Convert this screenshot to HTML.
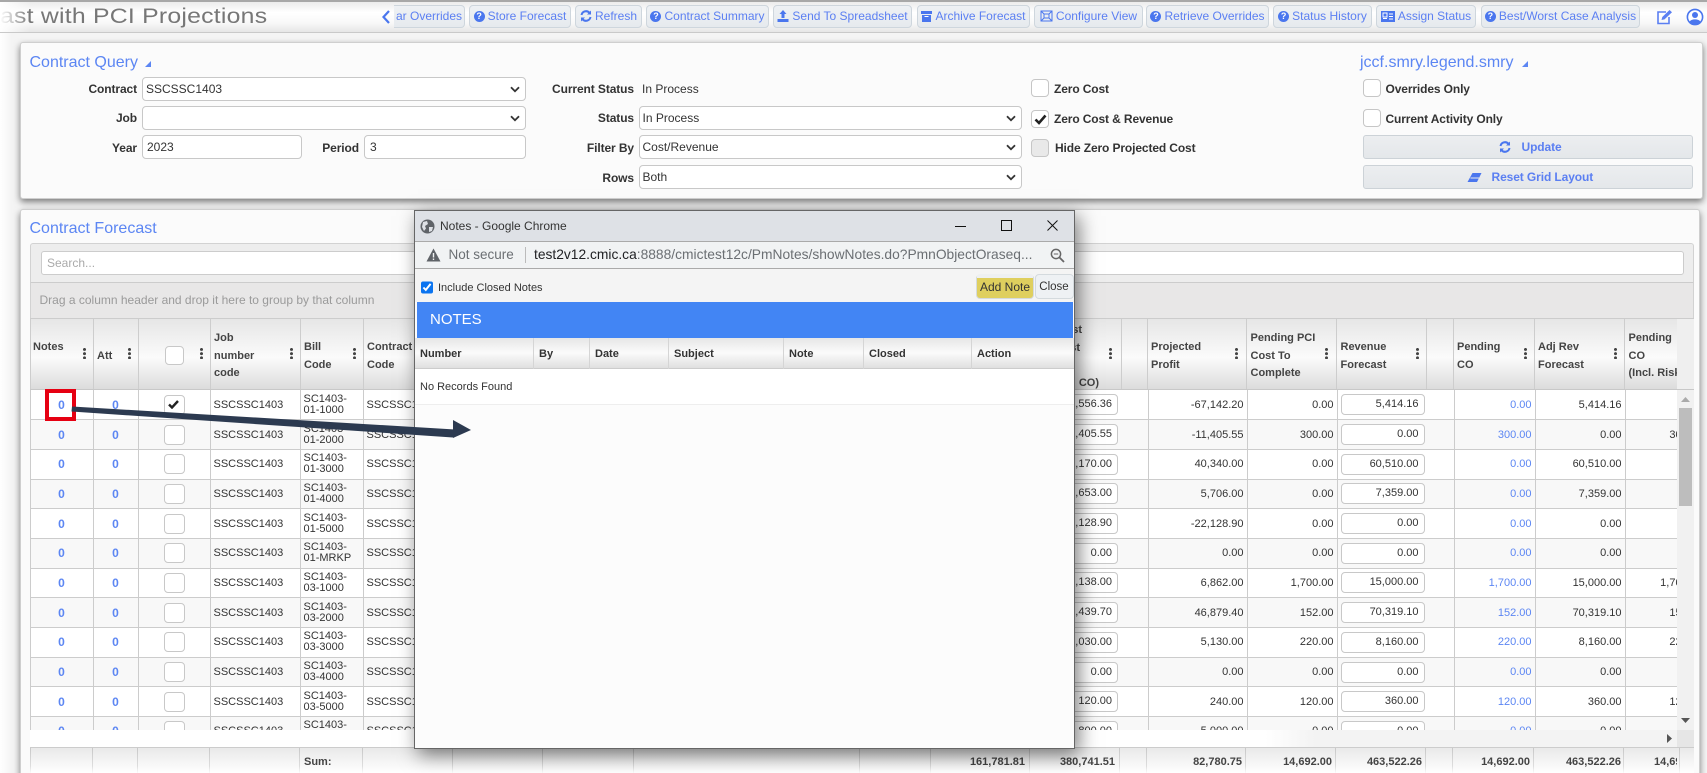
<!DOCTYPE html>
<html><head><meta charset="utf-8"><title>Forecast with PCI Projections</title>
<style>
html,body{margin:0;padding:0;width:1707px;height:773px;overflow:hidden;background:#f4f4f4;font-family:"Liberation Sans",Arial,sans-serif;font-size:12px;color:#333}
#wrap{position:absolute;left:0;top:0;width:1707px;height:773px;overflow:hidden;background:#f4f4f4}
div,span,b{box-sizing:border-box}
.a{position:absolute}
.btn{position:absolute;top:5px;height:23px;line-height:21px;border:1px solid #ced6dd;border-radius:4px;background:linear-gradient(#eef1f4,#e6eaee);color:#5b7ff2;text-align:center;white-space:nowrap;overflow:hidden}
.q{display:inline-block;width:11px;height:11px;border-radius:50%;background:#4a76ee;color:#fff;font-size:9px;font-weight:bold;line-height:11px;text-align:center;vertical-align:top;margin-top:5px;margin-right:3px}
.btn svg{vertical-align:-2px;margin-right:3px}
.panel{position:absolute;background:#fbfbfb;border:1px solid #cfcfcf;border-radius:3px;box-shadow:0 3px 7px rgba(0,0,0,.5)}
.h{position:absolute;font-size:16px;color:#5c86f3;white-space:nowrap;line-height:20px}
.lb{position:absolute;font-weight:bold;text-align:right;line-height:16px;white-space:nowrap;color:#333;letter-spacing:-.1px}
.in{position:absolute;background:#fff;border:1px solid #c8c8c8;border-radius:4px;line-height:22px;padding-left:3px;white-space:nowrap;color:#333}
.in svg{position:absolute;right:5px;top:8px}
.cb{position:absolute;width:18px;height:18px;background:#fff;border:1px solid #c6c6c6;border-radius:4px}
.cl{position:absolute;font-weight:bold;line-height:16px;white-space:nowrap;color:#333;letter-spacing:-.12px}
.gb{position:absolute;left:1363px;width:330px;height:24px;border:1px solid #ccd2d7;border-radius:3px;background:linear-gradient(#eceef0,#e4e7ea);color:#5b7ff2;font-weight:bold;line-height:23px;white-space:nowrap;letter-spacing:-.1px}
#rows{position:absolute;left:29.5px;top:390px;width:1647.5px;height:340px;overflow:hidden;background:#fff}
table{border-collapse:collapse;table-layout:fixed;width:1676.5px;font-size:11px;color:#333}
td{height:29.7px;border:1px solid #ccc;border-top:0;padding:0 3px;box-sizing:border-box;white-space:nowrap;overflow:hidden}
tr:nth-child(even) td{background:#f8f8f8}
.z{text-align:center;color:#5c86f3;font-weight:bold;font-size:12px}
.c{text-align:center}.c i{display:block;width:19px;height:18px;margin:0 auto;background:#fff;border:1px solid #c8c8c8;border-radius:4px;position:relative}
.c i svg{position:absolute;left:3px;top:4px}
.r{text-align:right}.bl{text-align:right;color:#5c86f3}
.bc{line-height:11px;white-space:normal}
.f{text-align:right;padding:0}
.f b{display:block;font-weight:normal;height:21px;line-height:19px;background:#fff;border:1px solid #c8c8c8;border-radius:4px;padding-right:5px;text-align:right}
td.n1 b{width:90px;margin-left:2px}
td.n2 b{width:84px;margin-left:3px}
#hd{position:absolute;left:30px;top:318px;width:1664px;height:72px;background:linear-gradient(#e6e6e6,#f5f5f5 40%,#fbfbfb 55%,#dcdcdc);border-top:1px solid #ccc;border-bottom:1px solid #c8c8c8;overflow:hidden}
.v{position:absolute;top:0;width:1px;height:72px;background:#cdcdcd}
.t{position:absolute;font-size:11px;font-weight:bold;line-height:17.5px;color:#444;white-space:nowrap}
.k{position:absolute;width:3px;height:11px;background:radial-gradient(circle at 1.5px 1.5px,#444 1.4px,transparent 1.6px) 0 0/3px 4.2px repeat-y}
#ft{position:absolute;left:30px;top:747px;width:1664px;height:26px;background:linear-gradient(#e9e9e9,#f6f6f6 60%,#fff);border-top:1px solid #ccc;overflow:hidden}
.fv{position:absolute;top:0;width:1px;height:26px;background:linear-gradient(#c8c8c8,#ddd 70%,#fff)}
.fs{position:absolute;top:7px;font-size:11px;font-weight:bold;line-height:14px;color:#444;white-space:nowrap;text-align:right}
#m{position:absolute;left:414px;top:210px;width:661px;height:539px;background:#fcfcfc;border:1px solid #666;box-shadow:4px 6px 18px rgba(0,0,0,.5);z-index:5}
.mc{position:absolute;top:0;height:31px;width:1px;background:#d5d5d5}
.mt{position:absolute;top:8px;font-size:11px;font-weight:bold;line-height:16px;color:#333}
</style></head><body>
<div id="wrap">

<!-- top bar -->
<div class="a" style="left:0;top:0;width:1707px;height:33px;background:linear-gradient(#ececec,#fff 35%,#f8f8f8 70%,#e6e6e6);border-top:2px solid #a8a8a8;border-bottom:1px solid #c9c9c9"></div>
<div class="a" style="left:0;top:1px;width:260px;height:34px;line-height:32px;font-size:21px;color:#777;white-space:nowrap;transform:scaleX(1.18);transform-origin:0 0;letter-spacing:.2px">ast with PCI Projections</div>
<div class="a" style="left:0;top:2px;width:30px;height:30px;background:linear-gradient(90deg,#fff,rgba(255,255,255,0))"></div>
<svg class="a" style="left:381px;top:9px" width="10" height="16" viewBox="0 0 10 16"><path d="M8 2 L2.5 8 L8 14" fill="none" stroke="#4a76ee" stroke-width="2.2"/></svg>
<div class="btn" style="left:394px;width:71px;border-left:0;border-radius:0 4px 4px 0">ar Overrides</div>
<div class="btn" style="left:469px;width:102px"><span class="q">?</span>Store Forecast</div>
<div class="btn" style="left:575px;width:67px"><svg width="12" height="12" viewBox="0 0 12 12"><path d="M1.5 5 A4.6 4.6 0 0 1 9.5 2.8 M10.5 7 A4.6 4.6 0 0 1 2.5 9.2" fill="none" stroke="#4a76ee" stroke-width="2"/><path d="M11 0.5 V4.5 H7 Z M1 11.5 V7.5 H5 Z" fill="#4a76ee"/></svg>Refresh</div>
<div class="btn" style="left:646px;width:123px"><span class="q">?</span>Contract Summary</div>
<div class="btn" style="left:773px;width:139px"><svg width="12" height="12" viewBox="0 0 12 12"><path d="M6 0 L9.5 4 H7.5 V8 H4.5 V4 H2.5 Z M0.5 9 H11.5 V12 H0.5 Z" fill="#4a76ee"/></svg>Send To Spreadsheet</div>
<div class="btn" style="left:917px;width:113px"><svg width="11" height="12" viewBox="0 0 11 12"><path d="M0 1 H11 V4 H0 Z M1 5 H10 V12 H1 Z" fill="#4a76ee"/><path d="M3.5 6.5 H7.5" stroke="#fff"/></svg>Archive Forecast</div>
<div class="btn" style="left:1034px;width:109px"><svg width="13" height="12" viewBox="0 0 13 12"><path d="M1 1 H12 V11 H1 Z M4 4 H9 V8 H4 Z M1 1 L4 4 M12 1 L9 4 M1 11 L4 8 M12 11 L9 8" fill="none" stroke="#4a76ee"/></svg>Configure View</div>
<div class="btn" style="left:1146px;width:123px"><span class="q">?</span>Retrieve Overrides</div>
<div class="btn" style="left:1273px;width:99px"><span class="q">?</span>Status History</div>
<div class="btn" style="left:1376px;width:100px"><svg width="14" height="11" viewBox="0 0 14 11"><path d="M0 0 H14 V11 H0 Z" fill="#4a76ee"/><path d="M2 2 H6 V6 H2 Z M2 7.5 H6 M8 3 H12 M8 5.5 H12 M8 8 H12" fill="none" stroke="#fff"/></svg>Assign Status</div>
<div class="btn" style="left:1481px;width:159px"><span class="q">?</span>Best/Worst Case Analysis</div>
<svg class="a" style="left:1656px;top:9px" width="17" height="16" viewBox="0 0 17 16"><path d="M10 3 H2 V14.5 H13 V8" fill="none" stroke="#5b7ff2" stroke-width="1.6"/><path d="M5.5 11 L6.3 8 L13.5 1 L16 3.2 L8.5 10.4 Z" fill="#5b7ff2"/></svg>
<svg class="a" style="left:1686px;top:8px" width="18" height="18" viewBox="0 0 18 18"><circle cx="9" cy="9" r="7.6" fill="#fff" stroke="#4a76ee" stroke-width="1.6"/><circle cx="9" cy="7" r="3" fill="#4a76ee"/><path d="M3.5 14 C4.5 10.5 13.5 10.5 14.5 14 A7 7 0 0 1 3.5 14 Z" fill="#4a76ee"/></svg>

<!-- query panel -->
<div class="panel" style="left:19.5px;top:42px;width:1683px;height:157px"></div>
<div class="h" style="left:29.5px;top:53px">Contract Query</div>
<svg class="a" style="left:145px;top:61px" width="6" height="6"><path d="M0 6 H6 V0 Z" fill="#5c86f3"/></svg>
<div class="lb" style="left:60px;width:77px;top:81px">Contract</div>
<div class="in" style="left:142px;top:77px;width:383.5px;height:24px">SSCSSC1403<svg width="10" height="7" viewBox="0 0 10 7"><path d="M1 1.2 L5 5.2 L9 1.2" fill="none" stroke="#333" stroke-width="1.8"/></svg></div>
<div class="lb" style="left:60px;width:77px;top:110px">Job</div>
<div class="in" style="left:142px;top:106px;width:383.5px;height:24px"><svg width="10" height="7" viewBox="0 0 10 7"><path d="M1 1.2 L5 5.2 L9 1.2" fill="none" stroke="#333" stroke-width="1.8"/></svg></div>
<div class="lb" style="left:60px;width:77px;top:140px">Year</div>
<div class="in" style="left:142px;top:135px;width:160px;height:24px;padding-left:4px">2023</div>
<div class="lb" style="left:300px;width:59px;top:140px">Period</div>
<div class="in" style="left:364px;top:135px;width:161.5px;height:24px;padding-left:5px">3</div>

<div class="lb" style="left:520px;width:114px;top:81px">Current Status</div>
<div class="a" style="left:642px;top:81px;line-height:16px">In Process</div>
<div class="lb" style="left:520px;width:114px;top:110px">Status</div>
<div class="in" style="left:638.5px;top:106px;width:383px;height:24px">In Process<svg width="10" height="7" viewBox="0 0 10 7"><path d="M1 1.2 L5 5.2 L9 1.2" fill="none" stroke="#333" stroke-width="1.8"/></svg></div>
<div class="lb" style="left:520px;width:114px;top:140px">Filter By</div>
<div class="in" style="left:638.5px;top:135px;width:383px;height:24px">Cost/Revenue<svg width="10" height="7" viewBox="0 0 10 7"><path d="M1 1.2 L5 5.2 L9 1.2" fill="none" stroke="#333" stroke-width="1.8"/></svg></div>
<div class="lb" style="left:520px;width:114px;top:170px">Rows</div>
<div class="in" style="left:638.5px;top:165px;width:383px;height:24px">Both<svg width="10" height="7" viewBox="0 0 10 7"><path d="M1 1.2 L5 5.2 L9 1.2" fill="none" stroke="#333" stroke-width="1.8"/></svg></div>

<div class="cb" style="left:1031px;top:79px"></div><div class="cl" style="left:1054px;top:81px">Zero Cost</div>
<div class="cb" style="left:1031px;top:110px"><svg style="position:absolute;left:2px;top:3px" width="13" height="11" viewBox="0 0 13 11"><path d="M1.5 5.5 L5 9 L11.5 1.5" fill="none" stroke="#222" stroke-width="2.6"/></svg></div><div class="cl" style="left:1054px;top:111px">Zero Cost &amp; Revenue</div>
<div class="cb" style="left:1031px;top:139px;background:#e9e9e9"></div><div class="cl" style="left:1055px;top:140px">Hide Zero Projected Cost</div>

<div class="h" style="left:1360px;top:53px">jccf.smry.legend.smry</div>
<svg class="a" style="left:1522px;top:61px" width="6" height="6"><path d="M0 6 H6 V0 Z" fill="#5c86f3"/></svg>
<div class="cb" style="left:1362.5px;top:79px"></div><div class="cl" style="left:1385.5px;top:81px">Overrides Only</div>
<div class="cb" style="left:1362.5px;top:109px"></div><div class="cl" style="left:1385.5px;top:111px">Current Activity Only</div>
<div class="gb" style="left:1362.5px;top:135px"><svg class="a" style="left:135px;top:5px" width="12" height="12" viewBox="0 0 12 12"><path d="M1.5 5 A4.6 4.6 0 0 1 9.5 2.8 M10.5 7 A4.6 4.6 0 0 1 2.5 9.2" fill="none" stroke="#4a76ee" stroke-width="2"/><path d="M11 0.5 V4.5 H7 Z M1 11.5 V7.5 H5 Z" fill="#4a76ee"/></svg><span class="a" style="left:158px">Update</span></div>
<div class="gb" style="left:1362.5px;top:165px"><svg class="a" style="left:103px;top:6px" width="15" height="12" viewBox="0 0 15 12"><path d="M5.5 1 H14.5 L10 10 H0.5 Z" fill="#4a76ee"/><path d="M3.5 6 H12" stroke="#e8ebee" stroke-width="1"/></svg><span class="a" style="left:128px">Reset Grid Layout</span></div>

<!-- forecast panel -->
<div class="panel" style="left:19.5px;top:209px;width:1680.5px;height:580px"></div>
<div class="h" style="left:29.5px;top:219px">Contract Forecast</div>
<div class="a" style="left:29.5px;top:243px;width:1664.5px;height:40px;background:#ededed;border:1px solid #d2d2d2;border-bottom:1px solid #ccc;border-radius:3px 3px 0 0"></div>
<div class="a" style="left:41px;top:251px;width:1643px;height:24px;background:#fff;border:1px solid #ccc;border-radius:3px;line-height:22px;padding-left:5px;color:#aaa">Search...</div>
<div class="a" style="left:29.5px;top:283px;width:1664.5px;height:35px;background:#e8e7e7;border-left:1px solid #d2d2d2;border-right:1px solid #d2d2d2;line-height:35px;padding-left:9px;color:#9a9a9a">Drag a column header and drop it here to group by that column</div>

<div id="hd">
<div class="v" style="left:0"></div><div class="v" style="left:63px"></div><div class="v" style="left:108px"></div><div class="v" style="left:180px"></div><div class="v" style="left:270px"></div><div class="v" style="left:333px"></div><div class="v" style="left:1091px"></div><div class="v" style="left:1117px"></div><div class="v" style="left:1216px"></div><div class="v" style="left:1306px"></div><div class="v" style="left:1396px"></div><div class="v" style="left:1423px"></div><div class="v" style="left:1504px"></div><div class="v" style="left:1594px"></div><div class="v" style="left:1647px"></div>
<div class="a" style="left:1647px;top:0;width:17px;height:72px;background:#efefef"></div>
<div class="t" style="left:3px;top:20px">Notes</div>
<div class="t" style="left:67px;top:29px">Att</div>
<div class="a" style="left:135px;top:27px;width:19px;height:19px;background:#fff;border:1px solid #c8c8c8;border-radius:4px"></div>
<div class="t" style="left:184px;top:11px">Job<br>number<br>code</div>
<div class="t" style="left:274px;top:20px">Bill<br>Code</div>
<div class="t" style="left:337px;top:20px">Contract<br>Code</div>
<div class="t" style="left:952px;top:3px;width:100px;text-align:right">Forecast</div>
<div class="t" style="left:950px;top:21px;width:100px;text-align:right">Cost</div>
<div class="t" style="left:960px;top:56px;width:109px;text-align:right">(Incl. Pending CO)</div>
<div class="t" style="left:1121px;top:20px">Projected<br>Profit</div>
<div class="t" style="left:1220.5px;top:11px">Pending PCI<br>Cost To<br>Complete</div>
<div class="t" style="left:1310.5px;top:20px">Revenue<br>Forecast</div>
<div class="t" style="left:1427px;top:20px">Pending<br>CO</div>
<div class="t" style="left:1508px;top:20px">Adj Rev<br>Forecast</div>
<div class="a" style="left:1595px;top:0;width:52px;height:70px;overflow:hidden"><div class="t" style="left:3.5px;top:11px">Pending<br>CO<br>(Incl. Risk)</div></div>
<div class="k" style="left:53px;top:29px"></div><div class="k" style="left:98px;top:29px"></div><div class="k" style="left:170px;top:29px"></div><div class="k" style="left:260px;top:29px"></div><div class="k" style="left:323px;top:29px"></div><div class="k" style="left:1079px;top:29px"></div><div class="k" style="left:1205px;top:29px"></div><div class="k" style="left:1295px;top:29px"></div><div class="k" style="left:1386px;top:29px"></div><div class="k" style="left:1494px;top:29px"></div><div class="k" style="left:1584px;top:29px"></div>
</div>

<div id="rows"><table>
<colgroup><col style="width:63px"><col style="width:45px"><col style="width:72px"><col style="width:90px"><col style="width:63px"><col style="width:90px"><col style="width:572.5px"><col style="width:122.5px"><col style="width:99px"><col style="width:90px"><col style="width:117px"><col style="width:81px"><col style="width:90px"><col style="width:81.5px"></colgroup>
<tr><td class="z">0</td><td class="z">0</td><td class="c"><i><svg width="11" height="9" viewBox="0 0 11 9"><path d="M1 4.5 L4 7.5 L10 1" fill="none" stroke="#222" stroke-width="2.4"/></svg></i></td><td>SSCSSC1403</td><td class="bc">SC1403-<br>01-1000</td><td>SSCSSC1403</td><td></td><td class="f n1"><b>72,556.36</b></td><td class="r">-67,142.20</td><td class="r">0.00</td><td class="f n2"><b>5,414.16</b></td><td class="bl">0.00</td><td class="r">5,414.16</td><td class="r"></td></tr>
<tr><td class="z">0</td><td class="z">0</td><td class="c"><i></i></td><td>SSCSSC1403</td><td class="bc">SC1403-<br>01-2000</td><td>SSCSSC1403</td><td></td><td class="f n1"><b>11,405.55</b></td><td class="r">-11,405.55</td><td class="r">300.00</td><td class="f n2"><b>0.00</b></td><td class="bl">300.00</td><td class="r">0.00</td><td class="r">300.00</td></tr>
<tr><td class="z">0</td><td class="z">0</td><td class="c"><i></i></td><td>SSCSSC1403</td><td class="bc">SC1403-<br>01-3000</td><td>SSCSSC1403</td><td></td><td class="f n1"><b>20,170.00</b></td><td class="r">40,340.00</td><td class="r">0.00</td><td class="f n2"><b>60,510.00</b></td><td class="bl">0.00</td><td class="r">60,510.00</td><td class="r"></td></tr>
<tr><td class="z">0</td><td class="z">0</td><td class="c"><i></i></td><td>SSCSSC1403</td><td class="bc">SC1403-<br>01-4000</td><td>SSCSSC1403</td><td></td><td class="f n1"><b>1,653.00</b></td><td class="r">5,706.00</td><td class="r">0.00</td><td class="f n2"><b>7,359.00</b></td><td class="bl">0.00</td><td class="r">7,359.00</td><td class="r"></td></tr>
<tr><td class="z">0</td><td class="z">0</td><td class="c"><i></i></td><td>SSCSSC1403</td><td class="bc">SC1403-<br>01-5000</td><td>SSCSSC1403</td><td></td><td class="f n1"><b>22,128.90</b></td><td class="r">-22,128.90</td><td class="r">0.00</td><td class="f n2"><b>0.00</b></td><td class="bl">0.00</td><td class="r">0.00</td><td class="r"></td></tr>
<tr><td class="z">0</td><td class="z">0</td><td class="c"><i></i></td><td>SSCSSC1403</td><td class="bc">SC1403-<br>01-MRKP</td><td>SSCSSC1403</td><td></td><td class="f n1"><b>0.00</b></td><td class="r">0.00</td><td class="r">0.00</td><td class="f n2"><b>0.00</b></td><td class="bl">0.00</td><td class="r">0.00</td><td class="r"></td></tr>
<tr><td class="z">0</td><td class="z">0</td><td class="c"><i></i></td><td>SSCSSC1403</td><td class="bc">SC1403-<br>03-1000</td><td>SSCSSC1403</td><td></td><td class="f n1"><b>8,138.00</b></td><td class="r">6,862.00</td><td class="r">1,700.00</td><td class="f n2"><b>15,000.00</b></td><td class="bl">1,700.00</td><td class="r">15,000.00</td><td class="r">1,700.00</td></tr>
<tr><td class="z">0</td><td class="z">0</td><td class="c"><i></i></td><td>SSCSSC1403</td><td class="bc">SC1403-<br>03-2000</td><td>SSCSSC1403</td><td></td><td class="f n1"><b>23,439.70</b></td><td class="r">46,879.40</td><td class="r">152.00</td><td class="f n2"><b>70,319.10</b></td><td class="bl">152.00</td><td class="r">70,319.10</td><td class="r">152.00</td></tr>
<tr><td class="z">0</td><td class="z">0</td><td class="c"><i></i></td><td>SSCSSC1403</td><td class="bc">SC1403-<br>03-3000</td><td>SSCSSC1403</td><td></td><td class="f n1"><b>3,030.00</b></td><td class="r">5,130.00</td><td class="r">220.00</td><td class="f n2"><b>8,160.00</b></td><td class="bl">220.00</td><td class="r">8,160.00</td><td class="r">220.00</td></tr>
<tr><td class="z">0</td><td class="z">0</td><td class="c"><i></i></td><td>SSCSSC1403</td><td class="bc">SC1403-<br>03-4000</td><td>SSCSSC1403</td><td></td><td class="f n1"><b>0.00</b></td><td class="r">0.00</td><td class="r">0.00</td><td class="f n2"><b>0.00</b></td><td class="bl">0.00</td><td class="r">0.00</td><td class="r"></td></tr>
<tr><td class="z">0</td><td class="z">0</td><td class="c"><i></i></td><td>SSCSSC1403</td><td class="bc">SC1403-<br>03-5000</td><td>SSCSSC1403</td><td></td><td class="f n1"><b>120.00</b></td><td class="r">240.00</td><td class="r">120.00</td><td class="f n2"><b>360.00</b></td><td class="bl">120.00</td><td class="r">360.00</td><td class="r">120.00</td></tr>
<tr><td class="z">0</td><td class="z">0</td><td class="c"><i></i></td><td>SSCSSC1403</td><td class="bc">SC1403-<br>03-6000</td><td>SSCSSC1403</td><td></td><td class="f n1"><b>800.00</b></td><td class="r">5,000.00</td><td class="r">0.00</td><td class="f n2"><b>0.00</b></td><td class="bl">0.00</td><td class="r">0.00</td><td class="r"></td></tr>
</table></div>

<!-- scrollbars -->
<div class="a" style="left:1677px;top:390px;width:17px;height:340px;background:#f1f1f1"></div>
<svg class="a" style="left:1680px;top:396px" width="11" height="7"><path d="M5.5 1 L10 6 H1 Z" fill="#aaa"/></svg>
<div class="a" style="left:1679px;top:408px;width:13px;height:98px;background:#bdbdbd"></div>
<svg class="a" style="left:1680px;top:717px" width="11" height="7"><path d="M1 1 H10 L5.5 6 Z" fill="#555"/></svg>
<div class="a" style="left:29.5px;top:730px;width:1647.5px;height:17px;background:linear-gradient(90deg,#fff,#fff 75%,#f3f3f3 78%)"></div>
<svg class="a" style="left:1666px;top:733px" width="7" height="11"><path d="M1 1 L6 5.5 L1 10 Z" fill="#555"/></svg>
<div class="a" style="left:1677px;top:730px;width:17px;height:17px;background:#e6e6e6"></div>

<div id="ft">
<div class="fv" style="left:0"></div><div class="fv" style="left:62px"></div><div class="fv" style="left:107px"></div><div class="fv" style="left:179px"></div><div class="fv" style="left:269px"></div><div class="fv" style="left:332px"></div><div class="fv" style="left:422px"></div><div class="fv" style="left:512px"></div><div class="fv" style="left:603px"></div><div class="fv" style="left:829px"></div><div class="fv" style="left:900px"></div><div class="fv" style="left:999px"></div><div class="fv" style="left:1089px"></div><div class="fv" style="left:1116px"></div><div class="fv" style="left:1215px"></div><div class="fv" style="left:1305px"></div><div class="fv" style="left:1395px"></div><div class="fv" style="left:1422px"></div><div class="fv" style="left:1503px"></div><div class="fv" style="left:1593px"></div><div class="fv" style="left:1649px"></div>
<div class="fs" style="left:274px">Sum:</div>
<div class="fs" style="left:915px;width:80px">161,781.81</div>
<div class="fs" style="left:1005px;width:80px">380,741.51</div>
<div class="fs" style="left:1132px;width:80px">82,780.75</div>
<div class="fs" style="left:1222px;width:80px">14,692.00</div>
<div class="fs" style="left:1312px;width:80px">463,522.26</div>
<div class="fs" style="left:1420px;width:80px">14,692.00</div>
<div class="fs" style="left:1511px;width:80px">463,522.26</div>
<div class="a" style="left:1595px;top:0;width:52px;height:26px;overflow:hidden"><div class="fs" style="left:29px">14,692.00</div></div>
</div>

<!-- modal -->
<div id="m">
<div class="a" style="left:0;top:0;width:659px;height:31px;background:#dee1e6"></div>
<svg class="a" style="left:5px;top:8px" width="15" height="15" viewBox="0 0 15 15"><circle cx="7.5" cy="7.5" r="7" fill="#5f6368"/><path d="M3 3 L7 2 L8 5 L5 7 L6 9.5 L4 12 L2 8 Z M9 8 L13 8 L12 12 L9 13 Z" fill="#dee1e6"/></svg>
<div class="a" style="left:25px;top:7px;line-height:16px;color:#333;white-space:nowrap">Notes - Google Chrome</div>
<div class="a" style="left:540px;top:15px;width:11px;height:1px;background:#111"></div>
<div class="a" style="left:586px;top:9px;width:11px;height:11px;border:1px solid #111"></div>
<svg class="a" style="left:632px;top:9px" width="11" height="11"><path d="M0.5 0.5 L10.5 10.5 M10.5 0.5 L0.5 10.5" stroke="#111" fill="none"/></svg>

<div class="a" style="left:0;top:30px;width:659px;height:28px;background:#f1f3f4;border-top:1px solid #aaa;border-bottom:1px solid #aaa"></div>
<svg class="a" style="left:11px;top:37px" width="15" height="14" viewBox="0 0 15 14"><path d="M7.5 0.5 L14.5 13.5 H0.5 Z" fill="#5f6368"/><path d="M7.5 5 V9.5 M7.5 10.5 V12" stroke="#f1f3f4" stroke-width="1.4"/></svg>
<div class="a" style="left:33.5px;top:36px;line-height:16px;font-size:13.5px;color:#6b6f73;white-space:nowrap">Not secure</div>
<div class="a" style="left:109.5px;top:36px;width:1px;height:16px;background:#bbb"></div>
<div class="a" style="left:119px;top:36px;width:505px;overflow:hidden;line-height:16px;font-size:13.8px;color:#6b6f73;white-space:nowrap"><span style="color:#202124">test2v12.cmic.ca</span>:8888/cmictest12c/PmNotes/showNotes.do?PmnObjectOraseq...</div>
<svg class="a" style="left:635px;top:37px" width="15" height="15" viewBox="0 0 15 15"><circle cx="6" cy="6" r="4.6" fill="none" stroke="#666" stroke-width="1.5"/><path d="M3.8 6 H8.2" stroke="#666"/><path d="M9.5 9.5 L14 14" stroke="#666" stroke-width="1.8"/></svg>

<div class="a" style="left:0;top:58px;width:659px;height:33px;background:#f4f4f4"></div>
<input type="checkbox" checked style="position:absolute;left:6px;top:70px;width:12px;height:13px;margin:0;accent-color:#0b74f0">
<div class="a" style="left:23px;top:69px;font-size:11px;line-height:16px;white-space:nowrap">Include Closed Notes</div>
<div class="a" style="left:561px;top:63px;width:58px;height:25px;background:#dfcf5e;border:1px solid #d4dade;border-top:4px solid #eef0f2;border-radius:4px;text-align:center;line-height:19px;color:#333">Add Note</div>
<div class="a" style="left:619.5px;top:63px;width:39px;height:25px;background:#eef1f4;border:1px solid #d4dade;border-radius:4px;text-align:center;line-height:25px;color:#333;font-size:11.5px">Close</div>

<div class="a" style="left:2px;top:91px;width:656px;height:36px;background:#4285f4;color:#fff;font-size:15px;line-height:36px;padding-left:13px">NOTES</div>
<div class="a" style="left:0;top:127px;width:659px;height:31px;background:linear-gradient(#e6e6e6,#fbfbfb 50%,#dfdfdf);border-bottom:1px solid #ccc">
<div class="mc" style="left:118px"></div><div class="mc" style="left:174px"></div><div class="mc" style="left:253px"></div><div class="mc" style="left:368px"></div><div class="mc" style="left:448px"></div><div class="mc" style="left:556px"></div>
<div class="mt" style="left:5px">Number</div><div class="mt" style="left:124px">By</div><div class="mt" style="left:180px">Date</div><div class="mt" style="left:259px">Subject</div><div class="mt" style="left:374px">Note</div><div class="mt" style="left:454px">Closed</div><div class="mt" style="left:562px">Action</div>
</div>
<div class="a" style="left:0;top:158px;width:659px;height:36px;background:#fff;border-bottom:1px solid #eee;font-size:11px;line-height:36px;padding-left:5px">No Records Found</div>
</div>

<!-- annotation -->
<svg class="a" style="left:0;top:380px;z-index:9" width="500" height="70">
<rect x="47" y="11" width="27" height="28" fill="none" stroke="#e60012" stroke-width="4"/>
<path d="M72 26.5 L455 49.5 L453 57.5 L71.5 31.5 Z" fill="#2c3a50"/>
<path d="M453 40 L471 50 L453 58 Z" fill="#2c3a50"/>
</svg>
<div class="a" style="left:0;top:33px;width:12px;height:740px;background:linear-gradient(90deg,#fff,rgba(255,255,255,0))"></div>
</div>
</body></html>
